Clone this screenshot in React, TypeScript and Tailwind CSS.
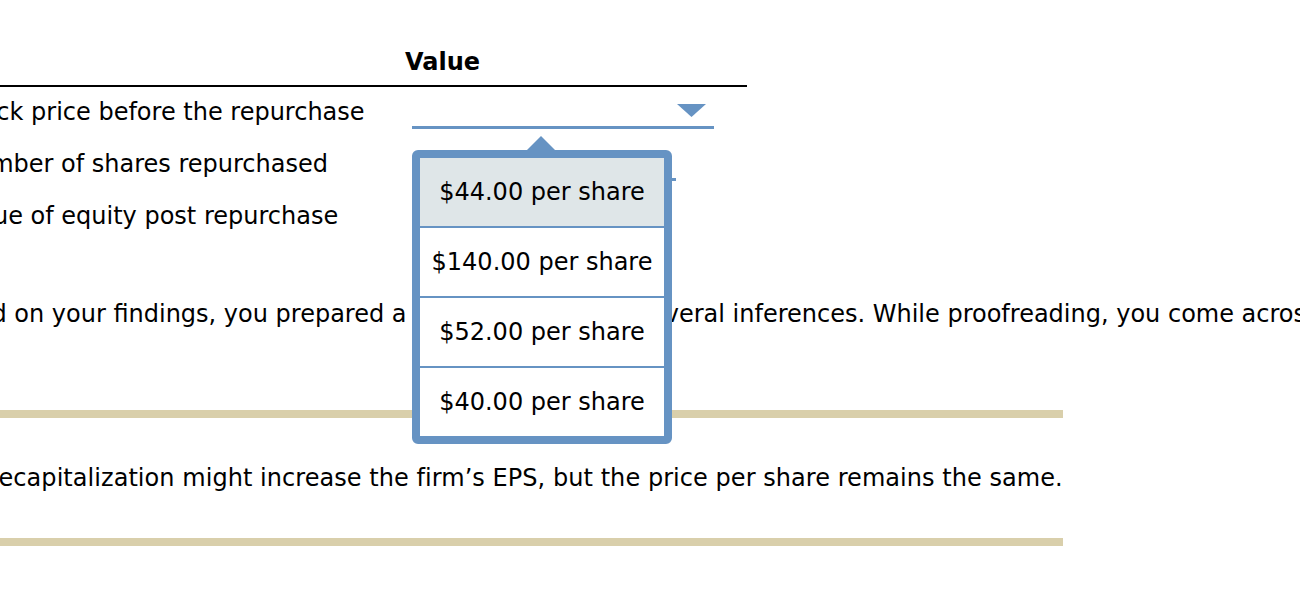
import React from "react";

const BLUE = "#6693c3";

function Caret() {
  return (
    <svg width="29" height="13" viewBox="0 0 29 13" className="block">
      <polygon points="0,0 29,0 14.5,13" fill={BLUE} />
    </svg>
  );
}

const options = ["$44.00 per share", "$140.00 per share", "$52.00 per share", "$40.00 per share"];

export default function App() {
  return (
    <div className="relative w-[1300px] h-[594px] overflow-hidden bg-white text-black font-['DejaVu_Sans','Liberation_Sans',sans-serif] text-[24px] leading-[28px]">
      <div className="pt-[48px]">
        {/* Table */}
        <div className="ml-[-43px] w-[790px]">
          <div className="flex border-b-2 border-black pb-[9px]">
            <div className="w-[448px] shrink-0" />
            <div className="font-bold">Value</div>
          </div>
          <div className="flex h-[52px]">
            <div className="w-[455px] shrink-0 pt-[11px] whitespace-nowrap">Stock price before the repurchase</div>
            <div className="w-[302px] h-[42px] border-b-[3px] border-[#6693c3] flex justify-end items-start pt-[17px] pr-[8px]">
              <Caret />
            </div>
          </div>
          <div className="flex h-[52px]">
            <div className="w-[455px] shrink-0 pt-[11px] whitespace-nowrap">Number of shares repurchased</div>
            <div className="w-[264px] h-[42px] border-b-[3px] border-[#6693c3]" />
          </div>
          <div className="flex h-[52px]">
            <div className="w-[455px] shrink-0 pt-[11px] whitespace-nowrap">Value of equity post repurchase</div>
          </div>
        </div>

        {/* Paragraph */}
        <p className="mt-[57px] ml-[-67px] whitespace-nowrap">
          Based on your findings, you prepared a report that makes several inferences. While proofreading, you come across some statements.
        </p>

        <div className="mt-[82px] w-[1063px] h-[8px] bg-[#d9cfab]" />

        <p className="mt-[46px] ml-[-35px] tracking-[0.05px] whitespace-nowrap">
          A recapitalization might increase the firm’s EPS, but the price per share remains the same.
        </p>

        <div className="mt-[46px] w-[1063px] h-[8px] bg-[#d9cfab]" />
      </div>

      {/* Open dropdown list */}
      <div className="absolute left-[412px] top-[150px] w-[260px] h-[294px] border-8 border-[#6693c3] rounded-[6px] bg-white">
        <div className="absolute left-[107px] top-[-22px]">
          <svg width="28" height="14" viewBox="0 0 28 14" className="block">
            <polygon points="0,14 14,0 28,14" fill={BLUE} />
          </svg>
        </div>
        <div className="flex flex-col">
          {options.map((o, i) => (
            <div
              key={o}
              className={
                i === 0
                  ? "h-[70px] border-b-2 border-[#6693c3] bg-[#dfe6e8] flex items-center justify-center"
                  : i === options.length - 1
                  ? "h-[68px] flex items-center justify-center"
                  : "h-[70px] border-b-2 border-[#6693c3] flex items-center justify-center"
              }
            >
              {o}
            </div>
          ))}
        </div>
      </div>
    </div>
  );
}
